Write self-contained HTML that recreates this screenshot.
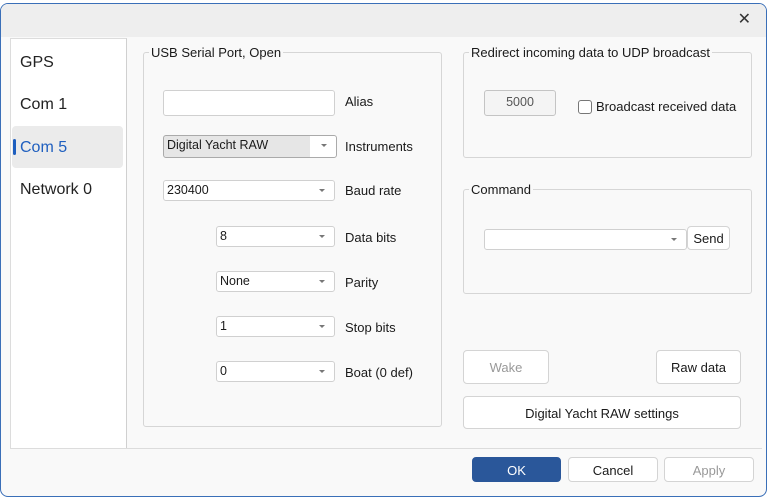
<!DOCTYPE html>
<html><head><style>
*{box-sizing:border-box;margin:0;padding:0}
body{width:768px;height:497px;background:#fff;position:relative;overflow:hidden;font-family:"Liberation Sans",sans-serif;font-size:13px;color:#1a1a1a}
.win{position:absolute;left:0;top:3px;width:767px;height:494px;border:1px solid #3a6fb8;border-radius:8px 8px 8px 8px;background:#f9f9f9;overflow:hidden}
.title{position:absolute;left:0;top:0;width:100%;height:33px;background:#eeeeee}
.a{position:absolute}
.lp{left:9px;top:34px;width:117px;height:411px;background:#fff;border:1px solid #dcdcdc;border-right-color:#d0d0d0}
.it{position:absolute;left:9px;font-size:16px;color:#222}
.grp{position:absolute;border:1px solid #d6d6d6;border-radius:3px}
.gl{position:absolute;top:-8px;left:5px;background:#f9f9f9;padding:0 2px;font-size:13px}
.in{position:absolute;background:#fff;border:1px solid #d0d0d0;border-radius:3px}
.cb{position:absolute;background:#fff;border:1px solid #d0d0d0;border-radius:3px;font-size:12.5px;padding:2px 0 0 3px}
.cb:after{content:"";position:absolute;right:9px;top:8px;border:3px solid transparent;border-top:3px solid #777}
.lb{position:absolute;font-size:13px}
.btn{position:absolute;background:#fff;border:1px solid #d4d4d4;border-radius:4px;text-align:center;font-size:13px}
</style></head><body>
<div class="win">
<div class="title"></div>
<div class="a" style="right:15px;top:5px;font-size:16px;color:#333">✕</div>
<div class="a lp">
<div class="it" style="top:15px">GPS</div>
<div class="it" style="top:57px">Com 1</div>
<div class="a" style="left:1px;top:87px;width:111px;height:42px;background:#ebebeb;border-radius:4px"></div>
<div class="a" style="left:2px;top:100px;width:3px;height:16px;background:#1f5fbf;border-radius:2px"></div>
<div class="it" style="top:100px;color:#1f5fbf">Com 5</div>
<div class="it" style="top:142px">Network 0</div>
</div>

<div class="grp" style="left:142px;top:48px;width:299px;height:375px"><div class="gl">USB Serial Port, Open</div></div>
<div class="in" style="left:162px;top:86px;width:172px;height:26px"></div>
<div class="lb" style="left:344px;top:90px">Alias</div>
<div class="cb" style="left:162px;top:131px;width:174px;height:23px;background:linear-gradient(90deg,#e6e6e6 85%,#fff 85%);border-color:#aaa">Digital Yacht RAW</div>
<div class="lb" style="left:344px;top:135px">Instruments</div>
<div class="cb" style="left:162px;top:176px;width:172px;height:21px">230400</div>
<div class="lb" style="left:344px;top:179px">Baud rate</div>
<div class="cb" style="left:215px;top:222px;width:119px;height:21px">8</div>
<div class="lb" style="left:344px;top:226px">Data bits</div>
<div class="cb" style="left:215px;top:267px;width:119px;height:21px">None</div>
<div class="lb" style="left:344px;top:271px">Parity</div>
<div class="cb" style="left:215px;top:312px;width:119px;height:21px">1</div>
<div class="lb" style="left:344px;top:316px">Stop bits</div>
<div class="cb" style="left:215px;top:357px;width:119px;height:21px">0</div>
<div class="lb" style="left:344px;top:361px">Boat (0 def)</div>

<div class="grp" style="left:462px;top:48px;width:289px;height:106px"><div class="gl">Redirect incoming data to UDP broadcast</div></div>
<div class="a" style="left:483px;top:86px;width:72px;height:26px;border:1px solid #c4c4c4;border-radius:3px;background:#f4f4f4;text-align:center;font-size:12.5px;color:#555;padding-top:4px">5000</div>
<div class="a" style="left:577px;top:96px;width:14px;height:14px;border:1px solid #777;border-radius:3px;background:#fff"></div>
<div class="lb" style="left:595px;top:95px">Broadcast received data</div>

<div class="grp" style="left:462px;top:185px;width:289px;height:105px"><div class="gl">Command</div></div>
<div class="cb" style="left:483px;top:225px;width:203px;height:21px"></div>
<div class="btn" style="left:686px;top:222px;width:43px;height:24px;padding-top:4px">Send</div>

<div class="btn" style="left:462px;top:346px;width:86px;height:34px;padding-top:9px;color:#999">Wake</div>
<div class="btn" style="left:655px;top:346px;width:85px;height:34px;padding-top:9px">Raw data</div>
<div class="btn" style="left:462px;top:392px;width:278px;height:33px;padding-top:9px">Digital Yacht RAW settings</div>

<div class="a" style="left:9px;top:444px;width:752px;height:1px;background:#dcdcdc"></div>
<div class="btn" style="left:471px;top:453px;width:89px;height:25px;background:#2a579a;border-color:#2a579a;color:#fff;padding-top:5px">OK</div>
<div class="btn" style="left:567px;top:453px;width:90px;height:25px;padding-top:5px">Cancel</div>
<div class="btn" style="left:663px;top:453px;width:90px;height:25px;padding-top:5px;color:#999">Apply</div>
</div>
</body></html>
